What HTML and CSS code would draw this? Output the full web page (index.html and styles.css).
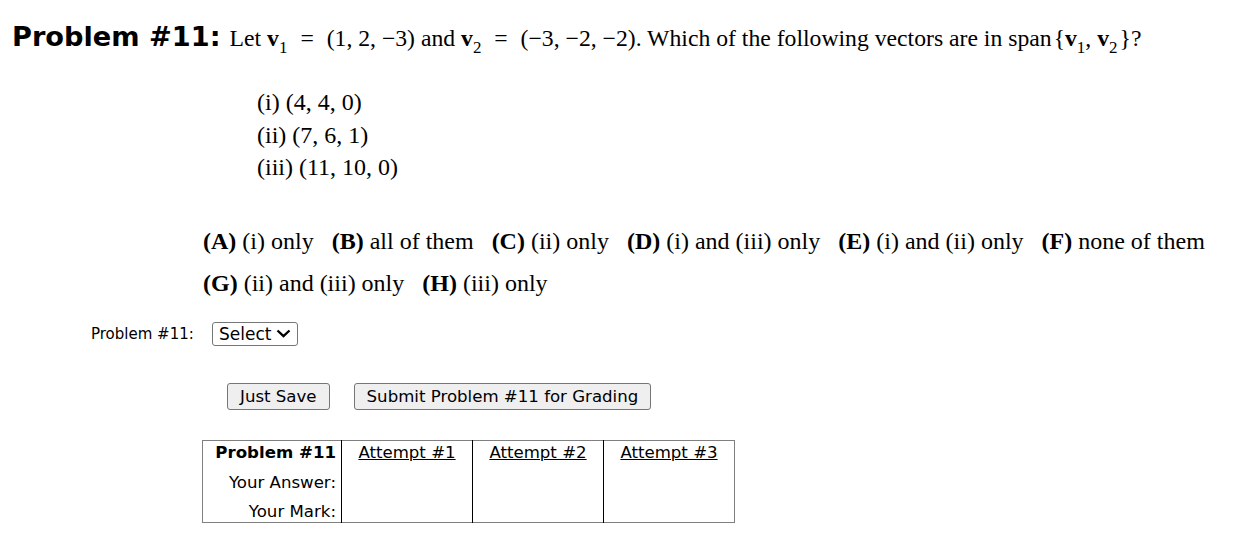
FILE: index.html
```html
<!DOCTYPE html>
<html>
<head>
<meta charset="utf-8">
<link rel="stylesheet" href="styles.css">
</head>
<body>
<div class="page">
  <div class="question">
    <span class="qtitle">Problem #11:</span>
    <span class="math">Let <b>v</b><sub>1</sub> <span class="eq">=</span> (1, 2, &minus;3) and <b>v</b><sub>2</sub> <span class="eq">=</span> (&minus;3, &minus;2, &minus;2). Which of the following vectors are in span<span class="brace">{</span><b>v</b><sub>1</sub>, <b>v</b><sub>2</sub><span class="brace">}</span>?</span>
  </div>
  <div class="items">
    <div class="item">(i) (4, 4, 0)</div>
    <div class="item">(ii) (7, 6, 1)</div>
    <div class="item">(iii) (11, 10, 0)</div>
  </div>
  <div class="choices">
    <div class="choice-line">
      <span class="choice"><b>(A)</b> (i) only</span>
      <span class="choice"><b>(B)</b> all of them</span>
      <span class="choice"><b>(C)</b> (ii) only</span>
      <span class="choice"><b>(D)</b> (i) and (iii) only</span>
      <span class="choice"><b>(E)</b> (i) and (ii) only</span>
      <span class="choice"><b>(F)</b> none of them</span>
    </div>
    <div class="choice-line">
      <span class="choice"><b>(G)</b> (ii) and (iii) only</span>
      <span class="choice"><b>(H)</b> (iii) only</span>
    </div>
  </div>
  <div class="answer-row">
    <span class="alabel">Problem #11:</span>
    <span class="select">Select <svg class="chev" width="15" height="9" viewBox="0 0 15 9"><path d="M1.5 1.5 L7.5 7.2 L13.5 1.5" fill="none" stroke="#000" stroke-width="2.3"/></svg></span>
  </div>
  <div class="buttons">
    <span class="btn">Just Save</span>
    <span class="btn">Submit Problem #11 for Grading</span>
  </div>
  <table class="attempts">
    <tr class="r1">
      <td class="rh"><b>Problem #11</b></td>
      <td class="ac"><a>Attempt #1</a></td>
      <td class="ac"><a>Attempt #2</a></td>
      <td class="ac"><a>Attempt #3</a></td>
    </tr>
    <tr class="r2">
      <td class="rh">Your Answer:</td>
      <td class="ac"></td>
      <td class="ac"></td>
      <td class="ac"></td>
    </tr>
    <tr class="r3">
      <td class="rh">Your Mark:</td>
      <td class="ac"></td>
      <td class="ac"></td>
      <td class="ac"></td>
    </tr>
  </table>
</div>
</body>
</html>
```
FILE: styles.css
```css
html, body {
  margin: 0;
  padding: 0;
  background: #fff;
  color: #000;
}
.page {
  padding: 21px 0 0 12px;
  font-family: "DejaVu Sans", Verdana, sans-serif;
}
.question {
  height: 51px;
  white-space: nowrap;
}
.qtitle {
  font-weight: bold;
  font-size: 27.2px;
}
.math {
  font-family: "Liberation Serif", "Times New Roman", serif;
  font-size: 23.7px;
  margin-left: 4px;
}
.math sub {
  font-size: 17px;
  vertical-align: -7px;
  line-height: 0;
}
.eq {
  margin: 0 7px;
}
.brace {
  margin-left: 2px;
}
.items {
  margin-left: 245px;
  margin-top: 14px;
  font-family: "Liberation Serif", "Times New Roman", serif;
  font-size: 24px;
}
.item {
  height: 32.5px;
  line-height: 32.5px;
}
.choices {
  margin-left: 191px;
  margin-top: 36px;
  font-family: "Liberation Serif", "Times New Roman", serif;
  font-size: 24px;
}
.choice-line {
  height: 42px;
  line-height: 42px;
  white-space: nowrap;
}
.choice {
  margin-right: 12px;
}
.answer-row {
  margin-top: 17px;
  margin-left: 79px;
  display: flex;
  align-items: center;
  font-size: 15px;
  height: 26px;
}
.alabel {
  width: 121px;
}
.select {
  display: inline-flex;
  align-items: center;
  gap: 5px;
  border: 1px solid #767676;
  border-radius: 3px;
  padding: 0 6px 0 6px;
  font-size: 17px;
  height: 22px;
  line-height: 22px;
}
.buttons {
  margin-top: 36px;
  margin-left: 215px;
  display: flex;
  gap: 24px;
}
.btn {
  display: inline-block;
  border: 1px solid #767676;
  border-radius: 3px;
  background: #efefef;
  font-size: 16.6px;
  padding: 3px 12px;
  line-height: 19px;
  height: 19px;
}
.attempts {
  margin-top: 30px;
  margin-left: 190px;
  border-collapse: collapse;
  border: 1px solid #808080;
  font-size: 16.6px;
}
.attempts td {
  padding: 0 5px;
  vertical-align: top;
  line-height: 20px;
}
.r1 td { height: 25px; padding-top: 2px; }
.r2 td { height: 24px; padding-top: 5px; }
.r3 td { height: 19px; padding-top: 5px; }
.rh {
  text-align: right;
  width: 128px;
  border-right: 1px solid #000;
}
.ac {
  text-align: center;
  width: 120px;
  border-right: 1px solid #000;
}
.attempts td.ac:last-child {
  border-right: none;
}
.ac a {
  color: #000;
  text-decoration: underline;
}
```
